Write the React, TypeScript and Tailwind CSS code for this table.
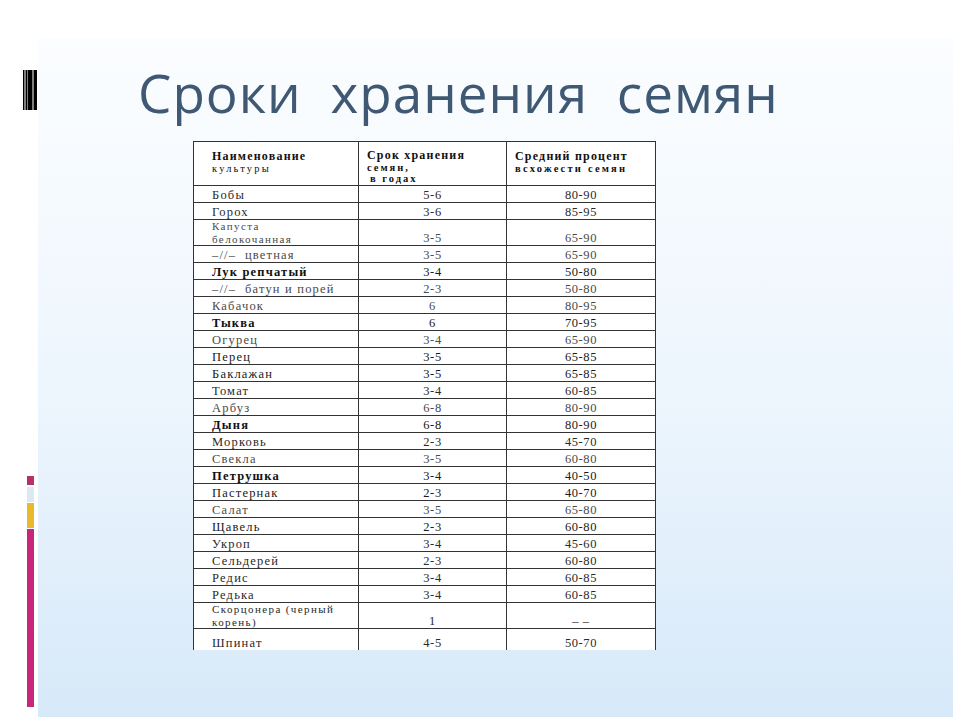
type Row = {
  name: string[];
  years: string;
  pct: string;
  h: number;
  bold?: boolean;
  dark?: boolean;
  faint?: boolean;
};

const rows: Row[] = [
  { name: ["Бобы"], years: "5-6", pct: "80-90", h: 17 },
  { name: ["Горох"], years: "3-6", pct: "85-95", h: 17 },
  { name: ["Капуста", "белокочанная"], years: "3-5", pct: "65-90", h: 26, faint: true },
  { name: ["–//–  цветная"], years: "3-5", pct: "65-90", h: 17, faint: true },
  { name: ["Лук репчатый"], years: "3-4", pct: "50-80", h: 17, bold: true },
  { name: ["–//–  батун и порей"], years: "2-3", pct: "50-80", h: 17, faint: true },
  { name: ["Кабачок"], years: "6", pct: "80-95", h: 17, faint: true },
  { name: ["Тыква"], years: "6", pct: "70-95", h: 17, bold: true },
  { name: ["Огурец"], years: "3-4", pct: "65-90", h: 17, faint: true },
  { name: ["Перец"], years: "3-5", pct: "65-85", h: 17, dark: true },
  { name: ["Баклажан"], years: "3-5", pct: "65-85", h: 17, dark: true },
  { name: ["Томат"], years: "3-4", pct: "60-85", h: 17 },
  { name: ["Арбуз"], years: "6-8", pct: "80-90", h: 17, faint: true },
  { name: ["Дыня"], years: "6-8", pct: "80-90", h: 17, bold: true },
  { name: ["Морковь"], years: "2-3", pct: "45-70", h: 17 },
  { name: ["Свекла"], years: "3-5", pct: "60-80", h: 17, faint: true },
  { name: ["Петрушка"], years: "3-4", pct: "40-50", h: 17, bold: true },
  { name: ["Пастернак"], years: "2-3", pct: "40-70", h: 17, dark: true },
  { name: ["Салат"], years: "3-5", pct: "65-80", h: 17, faint: true },
  { name: ["Щавель"], years: "2-3", pct: "60-80", h: 17, dark: true },
  { name: ["Укроп"], years: "3-4", pct: "45-60", h: 17 },
  { name: ["Сельдерей"], years: "2-3", pct: "60-80", h: 17 },
  { name: ["Редис"], years: "3-4", pct: "60-85", h: 17 },
  { name: ["Редька"], years: "3-4", pct: "60-85", h: 17 },
  { name: ["Скорцонера (черный", "корень)"], years: "1", pct: "– –", h: 26 },
  { name: ["Шпинат"], years: "4-5", pct: "50-70", h: 21 },
];

function Barcode() {
  return (
    <svg width="16" height="40" viewBox="0 0 16 40" className="ml-[22px]">
      <rect x="1" y="0" width="1.5" height="40" fill="#000" />
      <rect x="3.5" y="0" width="2" height="40" fill="#000" />
      <rect x="6" y="0" width="4.5" height="40" fill="#000" />
      <rect x="11.5" y="0" width="3.5" height="40" fill="#000" />
    </svg>
  );
}

function SideBars() {
  return (
    <div className="ml-[27px] mt-[366px] flex w-[7px] flex-col">
      <div className="h-[9px] bg-[#b8306a]" />
      <div className="mt-[2px] h-[15px] bg-[#dce9f3]" />
      <div className="mt-[1px] h-[25px] bg-[#e8b92c]" />
      <div className="mt-[1px] h-[178px] bg-[#c8267a]" />
    </div>
  );
}

function SeedTable() {
  return (
    <div
      className="ml-[155px] mt-[22px] w-[463px] bg-white text-[#2a2a2a] text-[12.5px]"
      style={{ fontFamily: '"Liberation Serif", "DejaVu Serif", serif' }}
    >
      <div className="grid grid-cols-[166px_148px_149px] border-t border-[#333]">
        <div className="h-[44px] border-l-[1.5px] border-r-[1.5px] border-b border-[#333] pl-[18px] pt-[9px] text-[12px] font-bold leading-[11.5px] tracking-[1.2px] text-[#111]">
          Наименование
          <br />
          <span className="text-[10.5px] font-normal tracking-[2.2px]">культуры</span>
        </div>
        <div className="h-[44px] border-r-[1.5px] border-b border-[#333] pl-[8px] pt-[8px] text-[12px] font-bold leading-[11.5px] tracking-[1.2px] text-[#111]">
          Срок хранения
          <br />
          <span className="text-[10.5px] tracking-[2px]">семян,</span>
          <br />
          <span className="pl-[3px] text-[10.5px] tracking-[2px]">в годах</span>
        </div>
        <div className="h-[44px] border-r-[1.5px] border-b border-[#333] pl-[8px] pt-[9px] text-[12px] font-bold leading-[11.5px] tracking-[1.2px] text-[#111]">
          Средний процент
          <br />
          <span className="text-[10.5px] tracking-[2.2px]">всхожести семян</span>
        </div>
        {rows.map((r, i) => {
          const last = i === rows.length - 1;
          const two = r.name.length > 1;
          const tone = r.bold
            ? "font-bold text-[#111]"
            : r.dark
              ? "text-[#1a1a1a]"
              : r.faint
                ? "text-[#4a4a4a]"
                : "";
          const numTone = r.bold || r.dark ? "text-[#1a1a1a]" : r.faint ? "text-[#4a4a4a]" : "";
          const line = last ? "" : "border-b";
          return [
            <div
              key={`n${i}`}
              style={{ height: r.h }}
              className={`flex flex-col justify-end border-l-[1.5px] border-r-[1.5px] border-[#333] pl-[18px] ${two ? "pb-0 text-[11px] leading-[12.5px] tracking-[1.4px]" : "pb-[1px] leading-[12px] tracking-[1.2px]"} ${line} ${tone}`}
            >
              {r.name.map((t) => (
                <span key={t} className="whitespace-pre">
                  {t}
                </span>
              ))}
            </div>,
            <div
              key={`y${i}`}
              style={{ height: r.h }}
              className={`flex items-end justify-center border-r-[1.5px] border-[#333] pb-[1px] leading-[12px] tracking-[0.6px] ${line} ${numTone}`}
            >
              {r.years}
            </div>,
            <div
              key={`p${i}`}
              style={{ height: r.h }}
              className={`flex items-end justify-center border-r-[1.5px] border-[#333] pb-[1px] leading-[12px] tracking-[0.6px] ${line} ${numTone}`}
            >
              {r.pct}
            </div>,
          ];
        })}
      </div>
    </div>
  );
}

export default function App() {
  return (
    <div className="flex h-[720px] w-[960px] overflow-hidden bg-white">
      <div className="flex w-[38px] shrink-0 flex-col pt-[70px]">
        <Barcode />
        <SideBars />
      </div>
      <div className="mt-[38px] h-[679px] w-[915px] bg-gradient-to-b from-[#fbfdff] via-[#eef6fd] to-[#d7e9f9]">
        <div className="pt-[28px]">
          <h1
            className="ml-[100px] h-[53px] text-[53px] leading-none tracking-[1px] text-[#3f5873] [word-spacing:14px]"
            style={{ fontFamily: '"Open Sans", "Noto Sans", sans-serif' }}
          >
            Сроки хранения семян
          </h1>
          <SeedTable />
        </div>
      </div>
    </div>
  );
}
